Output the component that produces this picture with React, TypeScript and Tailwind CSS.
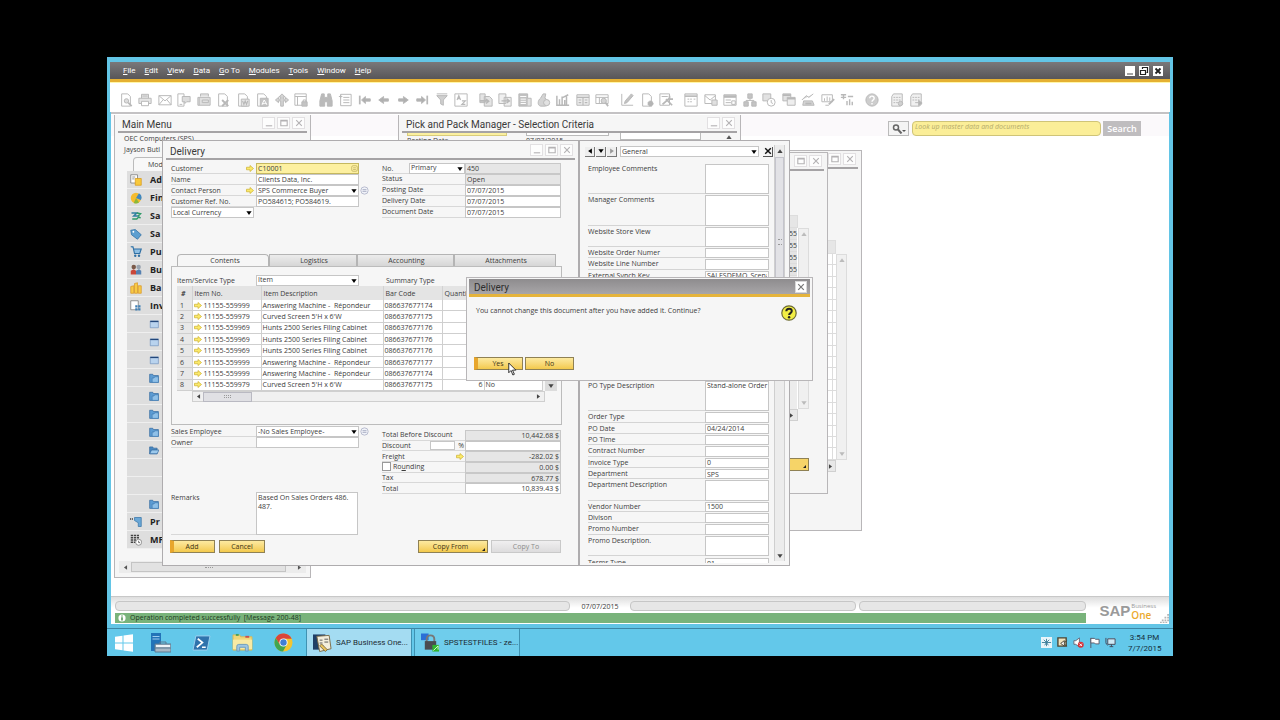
import React, { ReactNode } from "react";

const field =
  "block h-full w-full min-w-0 rounded-none border border-[#c6c6c6] bg-white px-px text-[7px] leading-[8px] text-[#3c3c3c] outline-none";
const grayField =
  "block h-full w-full min-w-0 rounded-none border border-[#c8c8c8] bg-[#e6e6e6] px-px text-[7px] leading-[8px] text-[#3c3c3c] outline-none";

/* ---------- small shared pieces ---------- */

function LinkArrow() {
  return (
    <svg viewBox="0 0 16 14" className="h-[7px] w-2 shrink-0">
      <path d="M1 4.5h7V1l7 6-7 6V9.500H1z" fill="#fbea6a" stroke="#d2b83c" strokeWidth="1.600" />
    </svg>
  );
}

function ListCircle() {
  return (
    <svg viewBox="0 0 16 16" className="h-[9px] w-[9px] shrink-0">
      <circle cx="8" cy="8" r="6.500" fill="#f1f3f9" stroke="#b0b4c8" strokeWidth="1.500" />
      <path d="M4.500 6.500h7M4.500 9.500h7" stroke="#a0a5bc" strokeWidth="1.500" />
    </svg>
  );
}

function Triangle({ dir, className }: { dir: "up" | "down" | "left" | "right"; className: string }) {
  const d = {
    up: "M4 1.500L7.500 6.500h-7z",
    down: "M4 6.500L.5 1.500h7z",
    left: "M1.500 4L6.500.5v7z",
    right: "M6.500 4L1.500.5v7z",
  }[dir];
  return (
    <svg viewBox="0 0 8 8" className={className}>
      <path d={d} fill="currentColor" />
    </svg>
  );
}

function Drop({ id, label, value }: { id: string; label?: string; value: string }) {
  return (
    <span className="relative block h-full w-full">
      <select
        id={id}
        aria-label={label}
        className="block h-full w-full appearance-none rounded-none border border-[#c6c6c6] bg-white py-0 pl-px pr-2 text-[7px] leading-[8px] text-[#3c3c3c] outline-none"
      >
        <option>{value}</option>
      </select>
      <Triangle dir="down" className="pointer-events-none absolute right-[2px] top-[3px] h-[6px] w-[6px] text-black" />
    </span>
  );
}

function WinButtons({ kinds }: { kinds: string[] }) {
  return (
    <span className="flex gap-[2px]">
      {kinds.map((k) => (
        <button
          key={k}
          type="button"
          aria-label={k}
          className="flex h-3 w-[13px] items-center justify-center border border-[#e2e0e2] bg-[#fdfdfd] text-[#b4b2b4]"
        >
          <svg viewBox="0 0 10 10" className="h-2 w-2" fill="none" stroke="currentColor" strokeWidth="1.400">
            {k === "Minimize" && <path d="M1 8.500h8" />}
            {k === "Maximize" && <path d="M1 1.500h8v7H1zM1 2.500h8" />}
            {k === "Close" && <path d="M1.500 1.500l7 7M8.500 1.500l-7 7" />}
          </svg>
        </button>
      ))}
    </span>
  );
}

function TitleBar({ title, kinds, tight }: { title: string; kinds: string[]; tight?: boolean }) {
  return (
    <div
      className={
        "mx-[3px] flex shrink-0 items-center justify-between border-b-2 border-[#a5a3a5] pr-[2px] " +
        (tight ? "h-[18px]" : "h-[19px]")
      }
    >
      <h2 className="whitespace-nowrap pl-1 pt-[3px] font-['Roboto'] text-[10px] leading-[13px] text-[#3a3a3a]">{title}</h2>
      <WinButtons kinds={kinds} />
    </div>
  );
}

function GoldButton({ children, className }: { children: ReactNode; className: string }) {
  return (
    <button
      type="button"
      className={
        "flex h-[13px] items-center justify-center border border-[#8f8154] bg-linear-to-b from-[#fdeaa0] to-[#f3c94a] text-[7px] leading-[9px] text-[#3c3416] " +
        className
      }
    >
      {children}
    </button>
  );
}

/* ---------- toolbar ---------- */

const doc = "M3 1h7l3 3v11H3z";
const G: Record<string, ReactNode> = {
  Preview: (<><path d={doc} /><circle cx="8.500" cy="9" r="2.500" fill="#ddd" /><path d="M10.500 11l4 4" strokeWidth="2" /></>),
  Print: (<><path d="M4 6V1.500h8V6M1 6h14v6H1z" fill="#e6e6e6" /><path d="M4 9.500h8v5H4z" fill="#fff" /><path d="M5 3.500h6" /></>),
  Mail: (<><path d="M1 3h14v10.500H1z" /><path d="M1 3l7 6 7-6M1 13.500l5-6M15 13.500l-5-6" /></>),
  Message: (<><path d="M1 1h7v14H1z" /><path d="M6 4h9v6h-4l-2 2v-2H6z" fill="#ddd" /><path d="M3 13h3" /></>),
  Fax: (<><path d="M4 4V1h9v3M1 5h14v9H1z" fill="#e0e0e0" /><path d="M2.500 5v9M6 8h7v3H6z" /></>),
  Excel: (<><path d={doc} /><path d="M7 8l7 7M14 8l-7 7" strokeWidth="2.200" /></>),
  Word: (<><path d={doc} /><path d="M6 7h9v8H6z" fill="#e6e6e6" /><path d="M7.500 9l1.500 4 1.500-4 1.500 4 1.500-4" strokeWidth="1.300" /></>),
  Pdf: (<><path d={doc} /><path d="M6 6h9v9H6z" fill="#c4c4c4" /><path d="M8 13l2.500-5 3 5c-2-2-4-1-5.500 0" stroke="#fff" /></>),
  Launch: (<path d="M8 1l3.500 3.500h-2V7H12V5l3.500 3L12 11V9H9.500v6h-3V9H4v2L.5 8 4 5v2h2.500V4.500h-2z" fill="#d4d4d4" />),
  Lock: (<><path d="M1 1h13v13H1zM1 4h13M4 4v10" /><path d="M9 10h6v5H9z" fill="#c4c4c4" /><path d="M10.500 10V8h3v2" /></>),
  Find: (<path d="M3 1h3v4h4V1h3l2 8v6H9.500v-5h-3v5H1V9z" fill="#bababa" />),
  Add: (<><path d="M3 1.500h12v13H3z" /><path d="M6 5h7M6 8h7M6 11h7M1 4h4M3 2v4" /></>),
  First: (<><path d="M2 3v10" strokeWidth="2" /><path d="M4 8l4.500-4v2.700H14v2.600H8.500V12z" fill="#b0b0b0" /></>),
  Previous: (<path d="M2 8l5.500-4v2.700H13v2.600H7.500V12z" fill="#b0b0b0" />),
  Next: (<path d="M14 8L8.500 4v2.700H3v2.600h5.500V12z" fill="#b0b0b0" />),
  Last: (<><path d="M14 3v10" strokeWidth="2" /><path d="M12 8L7.500 4v2.700H2v2.600h5.500V12z" fill="#b0b0b0" /></>),
  Filter: (<><path d="M2 3h12l-4.500 5v6l-3-1.500V8z" fill="#d0d0d0" /><path d="M2 1h12" /></>),
  Sort: (<><path d="M1 1h14v14H1z" /><path d="M3.500 8l2-5 2 5M4.500 6.500h2M9 9h4l-4 4h4" strokeWidth="1.300" /></>),
  Base: (<><path d="M1 1h6v10H1zM6 4h6l3 3v8H6z" fill="#e4e4e4" /><path d="M1 9h9M8 7l3 2.500L8 12" strokeWidth="1.800" /></>),
  Target: (<><path d="M1 1h8v11H1zM7 5h8v10H7z" fill="#f0f0f0" /><path d="M4 9h8M10 6.500L13 9l-3 2.500" strokeWidth="1.600" /></>),
  Profit: (<><path d="M1 1h10v14H1z" fill="#c2c2c2" /><path d="M2.500 4h7M3 7h6M3 9.500h6M3 12h6" stroke="#fff" /><path d="M11 6h4v9h-4" fill="#e2e2e2" /></>),
  Payment: (<><path d="M4 6l3-5h3l-1 5c4 1 5 9 0 9H4c-4-1-3-7 0-9z" fill="#d4d4d4" /><circle cx="11" cy="11" r="3.500" fill="#e2e2e2" /></>),
  Volume: (<path d="M1 3v11h14M4 14V7M7 14V4M10 14V8M12 14V3M8 5l6-3" strokeWidth="1.700" />),
  Journal: (<><path d="M1 2h14v12H1z" fill="#ececec" /><path d="M1 5h14M8 5v9M3 8h3M3 11h3M10 8h3M10 11h3" strokeWidth="1.300" /></>),
  Layout: (<><path d="M1 2h14v10H1zM1 5h14M5 5v7" /><circle cx="10" cy="9" r="3" fill="#d4d4d4" /><path d="M12 11l3 4" strokeWidth="2" /></>),
  Edit: (<><path d="M2 1v13h13" /><path d="M5 12l1-3 7-8 2 2-7 8z" fill="#c2c2c2" /></>),
  FormSettings: (<><path d={doc} /><circle cx="12" cy="12" r="3" fill="#b4b4b4" strokeDasharray="1.500 1" /></>),
  Tools: (<><path d="M1 1h11v13H1zM3 4h7" /><path d="M4 13l8-7M8 7l7 7M12 3v4h4" strokeWidth="2" /></>),
  Calendar: (<><path d="M1 1h14v14H1zM1 4h14M1 2.500h14" /><path d="M4 7h2M7 7h2M4 10h2M7 10h2M11 7h2" /></>),
  Alerts: (<><path d="M1 2h12v10H1zM1 3l6 5 6-5" /><path d="M9 8h6v6H9z" fill="#e0e0e0" /></>),
  Query: (<><path d="M1 2h14v12H1z" /><path d="M1 4h14" strokeWidth="3" /><path d="M3 8h6M3 11h6M10 9h4v4h-4z" /></>),
  Org: (<><path d="M5.500 1h5v5h-5zM1 10h5v5H1zM10 10h5v5h-5z" fill="#c4c4c4" /><path d="M8 6v2.500M3.500 10V8.500h9V10" /></>),
  Clock: (<><path d="M1 1h9v8H1z" fill="#e2e2e2" /><circle cx="10.500" cy="10.500" r="4.500" fill="#fff" /><path d="M10.500 8v3l2 1" /></>),
  Windows: (<><path d="M1 1h9v8H1z" fill="#e2e2e2" /><path d="M6 5h9v9H6z" fill="#eee" /><path d="M6 6.500h9M1 2.500h9" strokeWidth="2" /></>),
  Trend: (<><path d="M1 8l5-5 3 2 5-4M2 14l1-5h10l2 5z" fill="#d4d4d4" /><path d="M5 12h7" strokeWidth="2" /></>),
  Dashboard: (<><path d="M1 2h12v8H1zM5 14h4" /><path d="M4 9V6M7 9V4M10 9V5" /><path d="M9 13l6-6" strokeWidth="2.200" /></>),
  Pivot: (<><path d="M1 2h6M1 5h6M4 1v6M9 4h6M8 14V9M11 14V7M14 14v-4" strokeWidth="1.600" /></>),
  Help: (<><circle cx="8" cy="8" r="7" fill="#cdcdcd" /><path d="M5.500 6c0-3.500 5-3 5 0 0 2-2.500 2-2.500 4M8 11.500v1.500" stroke="#fff" strokeWidth="1.600" /></>),
  Sheet: (<><path d="M4 1h10v12l-2 2H2V4z" fill="#f0f0f0" /><path d="M4 5h8M4 8h8M4 11h5" strokeDasharray="2 1" /><circle cx="12" cy="12" r="2.500" fill="#d0d0d0" /></>),
  SheetNext: (<><path d="M4 1h10v12l-2 2H2V4z" fill="#f0f0f0" /><path d="M4 5h8M4 8h8" strokeDasharray="2 1" /><path d="M7 11h5M11 8.500l4 3-4 3z" fill="#b4b4b4" /></>),
};

const groups: { width: string; icons: string[] }[] = [
  { width: "w-[189px]", icons: ["Preview", "Print", "Mail", "Message", "Fax", "Excel", "Word", "Pdf", "Launch", "Lock"] },
  { width: "w-[149px]", icons: ["Find", "Add", "First", "Previous", "Next", "Last", "Filter", "Sort"] },
  { width: "w-[130px]", icons: ["Base", "Target", "Profit", "Payment", "Volume", "Journal", "Layout"] },
  { width: "w-[53px]", icons: ["Edit", "FormSettings", "Tools"] },
  { width: "w-[170px]", icons: ["Calendar", "Alerts", "Query", "Org", "Clock", "Windows", "Trend", "Dashboard", "Pivot"] },
  { width: "w-[14px]", icons: ["Help"] },
  { width: "w-[33px]", icons: ["Sheet", "SheetNext"] },
];

function Toolbar() {
  return (
    <div className="flex h-[30px] items-center gap-[11px] border-t border-[#fff6a8] bg-white pl-[9px] pt-1">
      {groups.map((g, i) => (
        <div key={i} className={"flex shrink-0 justify-between " + g.width}>
          {g.icons.map((n) => (
            <button key={n} type="button" aria-label={n} className="h-[14px] w-[14px]">
              <svg viewBox="0 0 16 16" className="h-full w-full" fill="none" stroke="#b8b8b8" strokeWidth="1.100">
                {G[n]}
              </svg>
            </button>
          ))}
        </div>
      ))}
    </div>
  );
}

function MenuBar() {
  const items: [string, string][] = [
    ["F", "ile"], ["E", "dit"], ["V", "iew"], ["D", "ata"], ["G", "o To"],
    ["M", "odules"], ["T", "ools"], ["W", "indow"], ["H", "elp"],
  ];
  return (
    <div className="flex h-5 items-center justify-between border-b-[3px] border-[#e5b032] bg-linear-to-b from-[#7a787a] to-[#585658] pl-[13px] pr-[7px]">
      <nav className="flex gap-[9px] font-['Roboto'] text-[8px] leading-[10px] text-white">
        {items.map(([a, b]) => (
          <a key={a + b} href="#" className="whitespace-nowrap">
            <u>{a}</u>
            {b}
          </a>
        ))}
      </nav>
      <div className="flex gap-1">
        {["Minimize app", "Restore app", "Close app"].map((n, i) => (
          <button key={n} type="button" aria-label={n} className="h-[10px] w-[10px] bg-white">
            <svg viewBox="0 0 10 10" className="h-full w-full" fill="none" stroke="#222" strokeWidth="1.200">
              {i === 0 && <path d="M2 8h6" stroke="#666" />}
              {i === 1 && <path d="M1.500 4.500h5v4h-5zM3.500 3V1.500h5v5H7.500" />}
              {i === 2 && <path d="M2.500 2.500l5 5M7.500 2.500l-5 5" strokeWidth="1.800" />}
            </svg>
          </button>
        ))}
      </div>
    </div>
  );
}

/* ---------- main menu window ---------- */

const M: Record<string, ReactNode> = {
  admin: (<><path d="M1 1h9v11H1z" fill="#fff" stroke="#777" /><path d="M3 4h4M3 6.500h3" stroke="#777" /><path d="M7 6h8v9H7z" fill="#f8c93c" stroke="#d79a1a" /></>),
  pie: (<><circle cx="8" cy="8" r="7" fill="#f5bc2e" /><path d="M8 8L12 1.500A7 7 0 0 1 14.500 10.500z" fill="#3f87bf" /><path d="M8 8l-3 6.500A7 7 0 0 0 12 14z" fill="#8cb93a" /></>),
  link: (<><path d="M2 4h7l-4 4h7" stroke="#2f7fa0" strokeWidth="2" /><path d="M3 12h6l3-3 2 2M9 4l5 1-3 3" stroke="#2f9a68" strokeWidth="2" /></>),
  tag: (<><path d="M1 3l6-1 8 7-5 6-8-6z" fill="#5d9fd0" stroke="#2f6fa3" /><circle cx="4.500" cy="5" r="1.200" fill="#fff" /></>),
  cart: (<><path d="M1 1h3l2 9h7l2-6H5" fill="#8fbfe3" stroke="#2f6fa3" strokeWidth="1.500" /><circle cx="7" cy="13" r="1.600" fill="#2f6fa3" /><circle cx="12" cy="13" r="1.600" fill="#2f6fa3" /></>),
  people: (<><circle cx="5" cy="4" r="3" fill="#7a5a4a" /><path d="M1 14V9l4-2 3 2v5z" fill="#c9473a" /><circle cx="11.500" cy="4" r="3" fill="#9aa4b0" /><path d="M8 14V9l4-2 3 2v5z" fill="#5580b0" /></>),
  bank: (<path d="M1 6l4-1V15H1zM6 2l4-1v14H6zM11 5h4v10h-4z" fill="#f8cb45" stroke="#d9982a" />),
  stock: (<><path d="M1 1h10v12H1z" fill="#fff" stroke="#777" /><path d="M7 7h3v3H7zM11 7h3v3h-3zM7 11h3v3H7zM11 11h3v3h-3z" fill="#3f7fb5" /></>),
  win: (<><path d="M2 3h13v11H2z" fill="#b9d3ee" stroke="#6a8cb8" /><path d="M2 4h13" stroke="#23477a" strokeWidth="2" /></>),
  folder: (<><path d="M1 2h5l1 2h8v11H1z" fill="#5d9cd3" stroke="#2b6299" /><path d="M5 8h3l1-2h6v9H5z" fill="#8fc0e8" stroke="#3a74ab" /></>),
  open: (<><path d="M1 3h5l1 2h6v9H1z" fill="#4a88c0" stroke="#2b6299" /><path d="M4 8h12l-3 6H1z" fill="#9cc9ec" stroke="#2b6299" /></>),
  pipe: (<><path d="M0 4h5" stroke="#444" strokeWidth="2" strokeDasharray="1.500 1" /><path d="M6 2h9v12h-4V9L6 6z" fill="#6aa7d6" stroke="#3a76a8" /></>),
  mrp: (<><path d="M1 2h12M1 5h12M1 8h7M1 11h6" stroke="#444" strokeWidth="1.800" strokeDasharray="3 1" /><circle cx="11.500" cy="11" r="4" fill="#fff" stroke="#777" /><path d="M11.500 9v2.500h2" stroke="#444" /></>),
};

const menuRows: { icon?: string; text?: string }[] = [
  { icon: "admin", text: "Ad" }, { icon: "pie", text: "Fin" }, { icon: "link", text: "Sa" }, { icon: "tag", text: "Sa" },
  { icon: "cart", text: "Pu" }, { icon: "people", text: "Bu" }, { icon: "bank", text: "Ba" }, { icon: "stock", text: "Inv" },
  { icon: "win" }, { icon: "win" }, { icon: "win" }, { icon: "folder" }, { icon: "folder" }, { icon: "folder" },
  { icon: "folder" }, { icon: "open" }, {}, {}, { icon: "folder" }, { icon: "pipe", text: "Pr" }, { icon: "mrp", text: "MF" },
];

function MainMenu() {
  return (
    <section className="absolute left-[3px] top-0 flex h-[463px] w-[197px] flex-col border border-t-0 border-[#b8b6b8] bg-[#f6f6f6]">
      <TitleBar title="Main Menu" kinds={["Minimize", "Maximize", "Close"]} tight />
      <div className="whitespace-nowrap pl-[9px] text-[7px] leading-[11px] text-[#3c3c3c]">
        <p>OEC Computers (SPS)</p>
        <p>Jayson Butl</p>
      </div>
      <div className="ml-[18px] mt-[2px] h-[14px] rounded-tl border border-b-0 border-[#bbb] bg-[#f8f8f8] pl-[14px] text-[7px] leading-[13px] text-[#3c3c3c]">
        Mod
      </div>
      <ul className="ml-3 w-[170px]">
        {menuRows.map((r, i) => (
          <li
            key={i}
            className={
              "flex h-[18px] items-center border-b border-[#efefef] bg-[#dedede] " + (r.text ? "pl-[3px]" : "pl-[22px]")
            }
          >
            {r.icon && (
              <svg viewBox="0 0 16 16" className={r.text ? "h-3 w-3 shrink-0" : "h-[10px] w-[10px] shrink-0"} fill="none">
                {M[r.icon]}
              </svg>
            )}
            {r.text && <b className="pl-2 text-[9px] leading-3 text-[#222]">{r.text}</b>}
          </li>
        ))}
      </ul>
      <div className="mx-1 mb-1 mt-auto flex h-3 items-center bg-[#ececec] px-1">
        <Triangle dir="left" className="h-[5px] w-[5px] text-[#555]" />
        <span className="ml-[3px] flex h-[10px] w-[155px] items-center justify-center border border-[#c4c4c4] bg-[#e2e2e2]">
          <span className="w-2 border-t border-dotted border-[#999]" />
        </span>
        <Triangle dir="right" className="ml-auto h-[5px] w-[5px] text-[#555]" />
      </div>
    </section>
  );
}

/* ---------- windows behind ---------- */

function PickAndPack() {
  return (
    <section className="absolute left-[287px] top-0 h-[60px] w-[343px] overflow-hidden border border-t-0 border-[#b8b6b8] bg-[#f6f6f6] text-[7px] leading-[7px] text-[#3c3c3c]">
      <TitleBar title="Pick and Pack Manager - Selection Criteria" kinds={["Minimize", "Close"]} tight />
      <div className="flex h-1 gap-[11px] pl-2 pr-1">
        <span className="h-[3px] w-[100px] border-x border-b border-[#d8cc7c] bg-[#fbf0a0]" />
        <span className="ml-2 h-[3px] w-[83px] border border-t-0 border-[#bbb] bg-white" />
        <span className="h-[7px] w-[81px] border border-t-0 border-[#bbb] bg-white" />
        <Triangle dir="up" className="ml-auto mr-1 mt-px h-[6px] w-[6px] text-[#555]" />
      </div>
      <div className="flex pl-2">
        <span className="w-[119px]">Posting Date</span>
        <span>07/07/2015</span>
      </div>
    </section>
  );
}

function GridWindows() {
  return (
    <>
      <section className="absolute left-[660px] top-[35px] flex h-[381px] w-[91px] flex-col items-end border border-[#b8b6b8] bg-[#f5f5f5]">
        <div className="mr-[3px] flex h-[18px] w-20 items-center justify-end border-b-2 border-[#a5a3a5] pr-[2px]">
          <WinButtons kinds={["Maximize", "Close"]} />
        </div>
        <div className="mr-[25px] mt-[71px] h-[14px] w-5 border border-[#ddd] bg-[#e6e6e6]" />
        <div className="mr-[14px] flex">
          <div className="flex h-[206px] w-5 flex-col">
            {Array.from({ length: 18 }, (_, i) => (
              <span key={i} className="flex flex-1 border-b border-[#dcdcdc] bg-white">
                <span className="ml-auto w-1 border-l border-[#dcdcdc]" />
              </span>
            ))}
          </div>
          <div className="flex w-[11px] flex-col items-center justify-between border border-[#dcdcdc] bg-[#f0f0f0] py-[2px] text-[#bbb]">
            <Triangle dir="up" className="h-[6px] w-[6px]" />
            <Triangle dir="down" className="h-[6px] w-[6px]" />
          </div>
        </div>
        <div className="mr-[25px] flex h-3 w-5 items-center justify-end border border-[#d0d0d0] bg-[#e8e8e8] pr-[2px]">
          <Triangle dir="right" className="h-[5px] w-[5px] text-[#444]" />
        </div>
      </section>
      <section className="absolute left-[650px] top-[37px] flex h-[342px] w-[67px] flex-col items-end border border-[#b8b6b8] bg-[#f5f5f5]">
        <div className="mr-[3px] flex h-[18px] w-[55px] items-center justify-end border-b-2 border-[#a5a3a5] pr-[2px]">
          <WinButtons kinds={["Maximize", "Close"]} />
        </div>
        <div className="mr-[29px] mt-11 h-[13px] w-5 border border-[#ddd] bg-[#e6e6e6]" />
        <div className="mr-[18px] flex">
          <div className="flex h-[181px] w-5 flex-col bg-white pr-px text-right text-[7px] leading-[11px] text-[#3c3c3c]">
            {Array.from({ length: 4 }, (_, i) => (
              <span key={i} className="border-b border-[#dcdcdc] bg-[#e4e4e4]">55</span>
            ))}
            <span className="flex-1 bg-[#ececec]" />
          </div>
          <div className="flex w-[11px] flex-col items-center justify-between border border-[#dcdcdc] bg-[#f0f0f0] py-[2px] text-[#bbb]">
            <Triangle dir="up" className="h-[6px] w-[6px]" />
            <Triangle dir="down" className="h-[6px] w-[6px]" />
          </div>
        </div>
        <div className="mr-[29px] flex h-3 w-5 items-center justify-end border border-[#d0d0d0] bg-[#e8e8e8] pr-[3px]">
          <Triangle dir="right" className="h-[5px] w-[5px] text-[#444]" />
        </div>
        <div className="mb-[22px] mr-[18px] mt-auto flex h-[13px] w-10 items-end justify-end border border-[#8f8154] bg-[#f6d468] p-[2px]">
          <svg viewBox="0 0 4 4" className="h-[3px] w-[3px]"><path d="M4 0v4H0z" fill="#222" /></svg>
        </div>
      </section>
    </>
  );
}

/* ---------- delivery window ---------- */

function LeftRow({ id, label, arrow, children, extra }: { id: string; label: string; arrow?: boolean; children: ReactNode; extra?: ReactNode }) {
  return (
    <div className="grid h-[11px] grid-cols-[85px_103px_12px]">
      <div className="flex items-center justify-between border-b border-[#d8d8d8] pr-[2px]">
        <label htmlFor={id}>{label}</label>
        {arrow && <LinkArrow />}
      </div>
      {children}
      <span className="flex items-center pl-px">{extra}</span>
    </div>
  );
}

const lines: [string, string, string][] = [
  ["11155-559999", "Answering Machine -  Répondeur", "086637677174"],
  ["11155-559979", "Curved Screen 5'H x 6'W", "086637677175"],
  ["11155-559969", "Hunts 2500 Series Filing Cabinet", "086637677176"],
  ["11155-559969", "Hunts 2500 Series Filing Cabinet", "086637677176"],
  ["11155-559969", "Hunts 2500 Series Filing Cabinet", "086637677176"],
  ["11155-559999", "Answering Machine -  Répondeur", "086637677177"],
  ["11155-559999", "Answering Machine -  Répondeur", "086637677174"],
  ["11155-559979", "Curved Screen 5'H x 6'W", "086637677175"],
];

function ItemTable() {
  const td = "overflow-hidden whitespace-pre border-b border-r border-[#cfcfcf] bg-white p-0 pl-px";
  return (
    <table className="h-[105px] w-[366px] table-fixed border-collapse text-left text-[7px] leading-[9px]">
      <colgroup>
        <col className="w-[15px]" />
        <col className="w-[69px]" />
        <col className="w-[122px]" />
        <col className="w-[59px]" />
        <col className="w-[42px]" />
        <col />
      </colgroup>
      <thead>
        <tr className="h-[14px] bg-[#e4e4e4]">
          <th className="p-0 pl-1 font-bold italic">#</th>
          <th className="border-x border-[#d2d2d2] p-0 pl-[2px] font-normal">Item No.</th>
          <th className="border-r border-[#d2d2d2] p-0 pl-[2px] font-normal">Item Description</th>
          <th className="border-r border-[#d2d2d2] p-0 pl-[2px] font-normal">Bar Code</th>
          <th className="p-0 pl-[2px] font-normal">Quanti</th>
          <th className="p-0" />
        </tr>
      </thead>
      <tbody>
        {lines.map(([no, desc, bar], i) => (
          <tr key={i}>
            <td className="border-b border-r border-[#cfcfcf] bg-[#e8e8e8] p-0 pl-[3px]">{i + 1}</td>
            <td className={td}>
              <span className="flex items-center gap-[2px]">
                <LinkArrow />
                {no}
              </span>
            </td>
            <td className={td}>{desc}</td>
            <td className={td}>{bar}</td>
            <td className={td + " pr-px text-right"}>{i === 7 ? "6" : ""}</td>
            <td className={td}>{i === 7 ? "No" : ""}</td>
          </tr>
        ))}
      </tbody>
    </table>
  );
}

function DeliveryWindow() {
  const tab =
    "h-3 border border-b-0 border-[#b4b4b4] bg-linear-to-b from-[#ececec] to-[#d6d6d6] pl-[2px] text-[7px] leading-[10px]";
  const totals: { label: string; value: string; white?: boolean }[] = [
    { label: "Total Before Discount", value: "10,442.68 $" },
    { label: "Discount", value: "", white: true },
    { label: "Freight", value: "-282.02 $" },
    { label: "Rounding", value: "0.00 $" },
    { label: "Tax", value: "678.77 $" },
    { label: "Total", value: "10,839.43 $", white: true },
  ];
  return (
    <section className="absolute left-[51px] top-[25px] flex h-[426px] w-[417px] flex-col border border-[#aeacae] bg-[#f6f6f6] text-[7px] leading-[9px] text-[#3c3c3c]">
      <TitleBar title="Delivery" kinds={["Minimize", "Maximize", "Close"]} />
      <div className="flex items-start gap-[11px] pl-2 pt-[3px]">
        <div>
          <LeftRow id="customer" label="Customer" arrow>
            <span className="relative block">
              <input id="customer" defaultValue="C10001" className="block h-full w-full border border-[#c5b860] bg-[#fdf0a0] px-px text-[7px] leading-[8px] text-[#3c3c3c] outline-none" />
              <svg viewBox="0 0 10 10" className="absolute right-[1px] top-[2px] h-[7px] w-[7px]" fill="none" stroke="#b7a95c">
                <rect x="1" y="1" width="8" height="8" rx="2" />
                <path d="M3 4h4M3 6.500h4" />
              </svg>
            </span>
          </LeftRow>
          <LeftRow id="name" label="Name">
            <input id="name" defaultValue="Clients Data, Inc." className={field} />
          </LeftRow>
          <LeftRow id="contact" label="Contact Person" arrow extra={<ListCircle />}>
            <Drop id="contact" value="SPS Commerce Buyer" />
          </LeftRow>
          <LeftRow id="ref" label="Customer Ref. No.">
            <input id="ref" defaultValue="PO584615; PO584619." className={field} />
          </LeftRow>
          <div className="h-[11px] w-[83px]">
            <Drop id="currency" label="Currency" value="Local Currency" />
          </div>
        </div>
        <div className="grid auto-rows-[11px] grid-cols-[83px_96px]">
          <div className="flex items-center justify-between border-b border-[#d8d8d8]">
            <label htmlFor="no">No.</label>
            <span className="h-[11px] w-[56px]"><Drop id="series" label="Series" value="Primary" /></span>
          </div>
          <input id="no" defaultValue="450" className={grayField} />
          <label htmlFor="status" className="border-b border-[#d8d8d8]">Status</label>
          <input id="status" defaultValue="Open" className={grayField} />
          {["Posting Date", "Delivery Date", "Document Date"].map((l) => (
            <React.Fragment key={l}>
              <label htmlFor={l} className="border-b border-[#d8d8d8]">{l}</label>
              <input id={l} defaultValue="07/07/2015" className={field} />
            </React.Fragment>
          ))}
        </div>
      </div>

      <div className="mt-9 flex pl-[14px]">
        <button type="button" className="-mb-px h-[13px] w-[92px] rounded-t border border-b-0 border-[#b4b4b4] bg-[#f6f6f6] pl-1 leading-3">Contents</button>
        <button type="button" className={tab + " w-[88px]"}>Logistics</button>
        <button type="button" className={tab + " w-[97px]"}>Accounting</button>
        <button type="button" className={tab + " w-[102px]"}>Attachments</button>
      </div>
      <div className="ml-2 h-[159px] w-[391px] border border-[#bcbcbc] pl-[5px] pt-[7px]">
        <div className="flex h-3 items-center">
          <label htmlFor="itype" className="w-[79px]">Item/Service Type</label>
          <span className="h-[11px] w-[103px]"><Drop id="itype" value="Item" /></span>
          <span className="pl-[27px]">Summary Type</span>
        </div>
        <div className="flex">
          <ItemTable />
          <div className="ml-[2px] flex h-[105px] w-3 flex-col justify-end bg-[#ececec]">
            <button type="button" aria-label="Scroll down" className="flex h-[11px] items-center justify-center bg-[#dcdcdc]">
              <Triangle dir="down" className="h-[6px] w-[6px] text-[#444]" />
            </button>
          </div>
        </div>
        <div className="ml-[15px] flex h-[11px] w-[353px] items-center justify-between border border-[#cfcfcf] bg-[#f0f0f0] px-[3px]">
          <span className="flex items-center gap-[2px]">
            <Triangle dir="left" className="h-[5px] w-[5px] text-[#444]" />
            <span className="flex h-[10px] w-[49px] items-center justify-center border border-[#b9b9c2] bg-[#e0e0e4]">
              <span className="h-[3px] w-[7px] border-y border-dotted border-[#999]" />
            </span>
          </span>
          <Triangle dir="right" className="h-[5px] w-[5px] text-[#444]" />
        </div>
      </div>

      <div className="flex h-[115px] items-start gap-[11px] pl-2 pt-px">
        <div className="w-[200px]">
          <LeftRow id="semp" label="Sales Employee" extra={<ListCircle />}>
            <Drop id="semp" value="-No Sales Employee-" />
          </LeftRow>
          <LeftRow id="owner" label="Owner">
            <input id="owner" className={field} />
          </LeftRow>
          <div className="mt-[44px] flex h-[43px]">
            <label htmlFor="remarks" className="w-[85px] border-b border-[#d8d8d8] pt-px">Remarks</label>
            <textarea
              id="remarks"
              defaultValue={"Based On Sales Orders 486.\n487."}
              className="block h-full w-[102px] resize-none border border-[#c6c6c6] bg-white px-px py-0 text-[7px] leading-[9px] outline-none"
            />
          </div>
        </div>
        <div className="mt-1 grid h-16 w-[179px] grid-cols-[83px_96px] grid-rows-6">
          {totals.map((t) => (
            <React.Fragment key={t.label}>
              <div className="flex items-center border-b border-[#d8d8d8]">
                {t.label === "Rounding" && (
                  <input id="round" type="checkbox" className="mr-[2px] h-[9px] w-[9px] appearance-none border border-[#999] bg-white" />
                )}
                <label htmlFor={t.label === "Rounding" ? "round" : t.label} className="whitespace-nowrap">
                  {t.label === "Rounding" ? (<>Ro<u>u</u>nding</>) : t.label}
                </label>
                {t.label === "Discount" && (
                  <>
                    <input aria-label="Discount percent" className="ml-auto h-[9px] w-[25px] border border-[#c6c6c6] bg-white" />
                    <span className="pl-[3px] pr-px">%</span>
                  </>
                )}
                {t.label === "Freight" && <span className="ml-auto pr-px"><LinkArrow /></span>}
              </div>
              <input id={t.label + (t.label === "Rounding" ? " amount" : "")} aria-label={t.label} defaultValue={t.value} className={(t.white ? field : grayField) + " text-right"} />
            </React.Fragment>
          ))}
        </div>
      </div>
      <div className="flex pl-[7px]">
        <GoldButton className="w-[45px] border-[#5c5236] border-l-4 border-l-[#e8a62c] pr-1">Add</GoldButton>
        <GoldButton className="ml-1 w-[46px]">Cancel</GoldButton>
        <GoldButton className="ml-[153px] w-[70px]">
          <span className="mx-auto">Copy From</span>
          <svg viewBox="0 0 4 4" className="mr-[2px] mt-[6px] h-[3px] w-[3px]"><path d="M4 0v4H0z" fill="#222" /></svg>
        </GoldButton>
        <button type="button" className="ml-[3px] h-[13px] w-[70px] border border-[#c9c9c9] bg-linear-to-b from-[#f0eff0] to-[#dddcdd] text-[#8c8c8c]">Copy To</button>
      </div>
    </section>
  );
}

/* ---------- user fields panel ---------- */

type UserField = { label: string; value?: string; h: string };
const one = "flex-[31]";
const two = "flex-[61]";
const three = "flex-[91]";
const upper: UserField[] = [
  { label: "Employee Comments", h: three },
  { label: "Manager Comments", h: three },
  { label: "Website Store View", h: two },
  { label: "Website Order Numer", h: one },
  { label: "Website Line Number", h: one },
  { label: "External Synch Key", value: "SALESDEMO_Scena", h: one },
];
const lower: UserField[] = [
  { label: "PO Type Description", value: "Stand-alone Order", h: three },
  { label: "Order Type", h: one },
  { label: "PO Date", value: "04/24/2014", h: one },
  { label: "PO Time", h: one },
  { label: "Contract Number", h: one },
  { label: "Invoice Type", value: "0", h: one },
  { label: "Department", value: "SPS", h: one },
  { label: "Department Description", h: two },
  { label: "Vendor Number", value: "1500", h: one },
  { label: "Divison", h: one },
  { label: "Promo Number", h: one },
  { label: "Promo Description.", h: two },
];

function UserRow({ f }: { f: UserField }) {
  return (
    <div className={"grid min-h-0 grid-cols-[117px_64px] grid-rows-1 pb-px " + f.h}>
      <label htmlFor={f.label} className="border-b border-[#d4d4d4]">{f.label}</label>
      {f.h !== one ? (
        <textarea id={f.label} defaultValue={f.value} className={field + " resize-none overflow-hidden whitespace-nowrap py-0"} />
      ) : (
        <input id={f.label} defaultValue={f.value} className={field} />
      )}
    </div>
  );
}

function UserFields() {
  return (
    <section className="absolute left-[468px] top-[25px] flex h-[426px] w-[211px] border border-[#aeacae] bg-[#f6f6f6] pl-[5px] text-[7px] leading-[9px] text-[#3c3c3c]">
      <div className="flex w-[189px] flex-col overflow-hidden">
        <div className="flex h-[19px] items-center pt-[2px]">
          {(["left", "down", "right"] as const).map((d) => (
            <button key={d} type="button" aria-label={"Go " + d} className="mr-px flex h-[10px] w-[10px] items-center justify-center border-b border-r border-[#777] bg-[#eee]">
              <Triangle dir={d} className={d === "right" ? "h-[6px] w-[6px] text-[#999]" : "h-[6px] w-[6px] text-black"} />
            </button>
          ))}
          <span className="ml-[2px] h-[11px] w-[139px]"><Drop id="category" label="Category" value="General" /></span>
          <button type="button" aria-label="Close panel" className="ml-1 flex h-[10px] w-[10px] items-center justify-center border-b border-r border-[#555] bg-[#f4f4f4]">
            <svg viewBox="0 0 10 10" className="h-2 w-2" stroke="#111" strokeWidth="1.800"><path d="M1.500 1.500l7 7M8.500 1.500l-7 7" /></svg>
          </button>
        </div>
        <div className="mt-1 flex h-[118px] shrink-0 flex-col pl-[3px]">
          {upper.map((f) => <UserRow key={f.label} f={f} />)}
        </div>
        <div className="mt-auto flex h-[176px] shrink-0 flex-col pl-[3px]">
          {lower.map((f) => <UserRow key={f.label} f={f} />)}
        </div>
        <div className="mb-[2px] grid h-[6px] shrink-0 grid-cols-[117px_64px] overflow-hidden pl-[3px] pt-px">
          <label htmlFor="terms">Terms Type</label>
          <input id="terms" defaultValue="01" className="block h-[11px] w-16 border border-[#c6c6c6] bg-white px-px text-[7px] leading-[8px] text-[#3c3c3c]" />
        </div>
      </div>
      <div className="my-1 flex w-[11px] flex-col items-center border-x border-[#cfcfcf] bg-[#ececec] text-[#444]">
        <Triangle dir="up" className="my-[3px] h-[6px] w-[6px] shrink-0" />
        <span className="flex h-[170px] w-full items-center justify-center border border-[#c4c4cc] bg-[#e2e2e6]">
          <span className="h-[6px] w-1 border-y border-dotted border-[#999]" />
        </span>
        <Triangle dir="down" className="mb-[2px] mt-auto h-[6px] w-[6px] shrink-0" />
      </div>
    </section>
  );
}

/* ---------- confirmation dialog ---------- */

function Dialog() {
  return (
    <section role="dialog" aria-label="Delivery" className="absolute left-[355px] top-[162px] h-[104px] w-[347px] border border-[#b8b6b8] bg-[#f6f6f6] px-[2px] pt-px text-[7px] leading-[9px] text-[#3c3c3c]">
      <div className="flex h-[18px] items-center justify-between border-b-[3px] border-[#e5b43c] bg-linear-to-b from-[#8e8c8e] to-[#a8a6a8] pl-[5px] pr-[3px]">
        <h2 className="pt-[2px] font-['Roboto'] text-[10px] leading-3 text-[#2e2e2e]">Delivery</h2>
        <button type="button" aria-label="Close dialog" className="flex h-[12px] w-3 items-center justify-center border border-[#d8d8d8] bg-white">
          <svg viewBox="0 0 10 10" className="h-2 w-2" stroke="#777" strokeWidth="1.500"><path d="M1.500 1.500l7 7M8.500 1.500l-7 7" /></svg>
        </button>
      </div>
      <div className="flex justify-between pl-[7px] pr-[13px] pt-2">
        <p className="pt-px">You cannot change this document after you have added it. Continue?</p>
        <svg viewBox="0 0 16 16" className="h-4 w-4">
          <circle cx="8" cy="8" r="7.200" fill="#f2ee45" stroke="#6c6a35" strokeWidth="1.200" />
          <path d="M5.300 6.300c0-3.600 5.500-3.400 5.500-.2 0 2-2.700 2-2.700 4" fill="none" stroke="#222" strokeWidth="2" />
          <circle cx="8.100" cy="12.200" r="1.200" fill="#222" />
        </svg>
      </div>
      <div className="flex gap-[2px] pl-[5px] pt-9">
        <GoldButton className="w-[49px] border-l-4 border-l-[#e8a62c] pr-1">Yes</GoldButton>
        <GoldButton className="w-[49px]">No</GoldButton>
      </div>
      <svg viewBox="0 0 12 18" className="absolute left-[41px] top-[84px] h-[14px] w-[9px]">
        <path d="M1 1v13l3-3 2.500 6 2-1-2.500-5.500h4.500z" fill="#fff" stroke="#222" strokeWidth="1.200" />
      </svg>
    </section>
  );
}

/* ---------- status bar and taskbar ---------- */

function StatusBar() {
  const box = "h-[10px] rounded-sm border border-[#c6c6c6] bg-[#e6e6e6]";
  return (
    <footer className="flex h-7 shrink-0 justify-between border-t border-[#c8c8c8] bg-linear-to-b from-[#dedede] to-white to-40% pl-1">
      <div className="w-[971px] pt-1">
        <div className="flex items-center">
          <span className={box + " min-w-0 flex-[456]"} />
          <span className="w-[60px] text-center text-[7px] leading-[9px] text-[#3c3c3c]">07/07/2015</span>
          <span className={box + " mr-[3px] min-w-0 flex-[226]"} />
          <span className={box + " min-w-0 flex-[226]"} />
        </div>
        <div className="mt-[2px] flex h-[10px] items-center gap-1 bg-[#79b37b] pl-[3px] text-[7px] leading-[10px] text-[#1e3a20]">
          <svg viewBox="0 0 10 10" className="h-2 w-2">
            <circle cx="5" cy="5" r="4.500" fill="#fff" />
            <path d="M5 4v4M5 2v1.200" stroke="#2d7a33" strokeWidth="1.600" />
          </svg>
          <span className="whitespace-pre">Operation completed successfully  [Message 200-48]</span>
        </div>
      </div>
      <div className="flex items-end">
        <div className="flex items-center gap-px pb-1">
          <span className="font-['Liberation_Sans'] text-[15px] font-bold leading-4 text-[#9a9a9a]">SAP</span>
          <span className="flex flex-col">
            <span className="text-[6px] leading-[8px] text-[#9a9a9a]">Business</span>
            <span className="text-[10px] font-semibold leading-[10px] text-[#eba92c]">One</span>
          </span>
        </div>
        <svg viewBox="0 0 10 10" className="mb-px ml-1 h-[9px] w-[9px]" fill="#b5b5b5">
          <path d="M8 0h2v2H8zM5 3h2v2H5zM8 3h2v2H8zM2 6h2v2H2zM5 6h2v2H5zM8 6h2v2H8zM0 8.500h2V10H0zM3 8.500h2V10H3zM6 8.500h2V10H6z" />
        </svg>
      </div>
    </footer>
  );
}

function Taskbar() {
  const slot = "flex w-[41px] items-center justify-center";
  const task = "flex w-[106px] items-center gap-1 border-x border-[#3f92b2] pl-[6px] font-['Roboto'] text-[8px] leading-[10px] text-[#1d2b33]";
  return (
    <div className="mt-1 flex h-7 shrink-0 border-t border-[#3d86a5] bg-[#63c8ea]">
      <button type="button" aria-label="Start" className="flex w-[33px] items-center justify-center">
        <svg viewBox="0 0 18 18" className="h-[18px] w-[18px]" fill="#fff">
          <path d="M0 2.800l7.500-1v6.700H0zM8.500 1.600L18 .3v8.200H8.500zM0 9.500h7.500v6.700l-7.500-1zM8.500 9.500H18v8.200l-9.500-1.300z" />
        </svg>
      </button>
      <button type="button" aria-label="Server Manager" className={slot}>
        <svg viewBox="0 0 20 20" className="h-5 w-5">
          <path d="M0 0h10v18H0z" fill="#2273b8" /><path d="M1.500 3.500h7M1.500 6h7" stroke="#9ccbef" />
          <path d="M4 11h16v8H4z" fill="#a9b8c4" stroke="#5b7a92" /><path d="M9 11V9h6v2M4 15h16" stroke="#5b7a92" fill="none" /><path d="M5 12h14v2H5z" fill="#eef4f8" />
        </svg>
      </button>
      <button type="button" aria-label="PowerShell" className={slot}>
        <svg viewBox="0 0 20 17" className="h-4 w-[19px]">
          <path d="M4 1h15l-3 15H1z" fill="#2f73ac" stroke="#9fd0ef" /><path d="M6 4l5 4-6 5M10.500 13h4" stroke="#fff" strokeWidth="1.800" fill="none" />
        </svg>
      </button>
      <button type="button" aria-label="File Explorer" className={slot}>
        <svg viewBox="0 0 22 20" className="h-[19px] w-[21px]">
          <path d="M1 2h7l1 2h12v14H1z" fill="#f1d778" stroke="#d5b95a" /><path d="M4 1h3v2H4z" fill="#4aa05a" /><path d="M14 3h4v2h-4z" fill="#c85050" />
          <path d="M1 7h20v10H1z" fill="#f9eaa4" /><path d="M5 19v-5q0-2 2-2h8q2 0 2 2v5h-3v-4H8v4z" fill="#9fc6e2" stroke="#6a9cc0" />
        </svg>
      </button>
      <button type="button" aria-label="Chrome" className={slot}>
        <svg viewBox="0 0 20 20" className="h-[19px] w-[19px]">
          <circle cx="10" cy="10" r="9.500" fill="#f3c530" />
          <path d="M10 6h8.600A9.500 9.500 0 0 0 1.800 5.200L6 12z" fill="#d9453a" />
          <path d="M1.800 5.200A9.500 9.500 0 0 0 9.500 19.500L13.500 12 6 12z" fill="#41a550" />
          <circle cx="10" cy="10" r="4.300" fill="#fff" /><circle cx="10" cy="10" r="3.400" fill="#3f7fd6" />
        </svg>
      </button>
      <button type="button" className={task + " ml-[2px] bg-[#a4dcf2]"}>
        <svg viewBox="0 0 20 20" className="h-5 w-[19px] shrink-0">
          <path d="M0 1h13v16H0z" fill="#1f3f66" /><path d="M4 3l13-1 2 14-12 3z" fill="#f3eedc" stroke="#7a6a48" />
          <path d="M7 7h3M12 6h4M7 10h3M12 9h4M8 13h3" stroke="#555" /><path d="M9 11l6 6-2 2-6-6z" fill="#e8c35a" stroke="#7a6a48" />
        </svg>
        <span className="whitespace-nowrap">SAP Business One...</span>
      </button>
      <button type="button" className={task + " ml-[2px] bg-[#6fcdec]"}>
        <svg viewBox="0 0 20 20" className="h-5 w-[19px] shrink-0">
          <path d="M0 0h8v7H0z" fill="#2a6fd6" /><path d="M6 9V6q0-4 4-4t4 4v3" fill="none" stroke="#777" strokeWidth="2" />
          <path d="M4 8h12v9H4z" fill="#4a4d50" /><path d="M12 12h7v7h-7z" fill="#2fb52f" /><path d="M13 18l5-5M18 13v4" stroke="#d8ffd8" />
        </svg>
        <span className="whitespace-nowrap">SPSTESTFILES - ze...</span>
      </button>
      <div className="ml-auto flex items-center gap-[5px]">
        <svg viewBox="0 0 12 12" className="h-[11px] w-[11px]"><path d="M0 0h12v12H0z" fill="#e9f5fa" /><path d="M1 6h10M6 2v8M3 3l3 3 3-3M4 9l2-3 2 3" stroke="#3b7d99" fill="none" /></svg>
        <svg viewBox="0 0 12 12" className="h-[11px] w-[11px]"><path d="M1 1h9v9H1z" fill="#efe3bd" stroke="#4a4535" strokeWidth="1.500" /><path d="M4 7l4-3v6z" fill="#fff" stroke="#4a4535" /><path d="M8 6l3-2M8 8l3 2" stroke="#4a4535" /></svg>
        <svg viewBox="0 0 12 12" className="h-[11px] w-[11px]"><path d="M1 4h2l4-3v10L3 8H1z" fill="#fff" stroke="#667" /><circle cx="8.500" cy="8.500" r="3.200" fill="#d8343a" /><path d="M7.200 7.200l2.600 2.600M9.800 7.200L7.200 9.800" stroke="#fff" /></svg>
        <svg viewBox="0 0 12 12" className="h-[11px] w-[11px]"><path d="M2 1v11" stroke="#556" /><path d="M2 1.500h4l1 1h4v5H7l-1-1H2z" fill="#fff" stroke="#556" /></svg>
        <svg viewBox="0 0 12 12" className="h-[11px] w-[11px]"><path d="M3 2h8v6H3zM5 10.500h4M7 8v2.500" fill="#cfe9f5" stroke="#445" /><path d="M1 1v5q0 2 2 3" fill="none" stroke="#445" /></svg>
      </div>
      <div className="ml-3 mr-3 flex w-[33px] flex-col justify-center text-center font-['Roboto'] text-[8px] leading-[11px] text-[#17303c]">
        <span>3:54 PM</span>
        <span>7/7/2015</span>
      </div>
    </div>
  );
}

export default function App() {
  return (
    <div className="flex min-h-screen bg-black px-[107px] pb-16 pt-[57px] font-['Open_Sans',sans-serif]">
      <div className="flex min-w-0 flex-1 flex-col bg-[#63c5e6] pt-[5px]">
        <div className="mx-[3px] flex min-h-0 flex-1 flex-col">
          <MenuBar />
          <Toolbar />
          <div className="mx-px flex min-h-0 flex-1 flex-col bg-white">
            <div className="h-[3px] shrink-0 border-t-2 border-[#c4c2c4] bg-white" />
            <main className="relative min-h-[470px] flex-1 overflow-hidden bg-white">
              <div className="h-[21px] bg-[#fbf9fb] pl-[777px] pt-[6px]">
                <form className="flex h-[15px] items-stretch">
                  <button type="button" aria-label="Search scope" className="flex w-[21px] items-center justify-center border border-[#bbb] bg-[#f4f4f4]">
                    <svg viewBox="0 0 16 10" className="h-[10px] w-4" fill="none" stroke="#666" strokeWidth="1.500">
                      <circle cx="5" cy="3.500" r="2.500" /><path d="M7 5.500l3.500 4" strokeWidth="2" /><path d="M11 6h4l-2 2z" fill="#555" stroke="none" />
                    </svg>
                  </button>
                  <input aria-label="Search text" placeholder="Look up master data and documents" className="ml-[3px] w-[189px] rounded-sm border border-[#cfc478] bg-[#fbee98] px-[2px] pb-1 font-['Noto_Sans'] text-[7px] italic leading-[8px] outline-none placeholder:text-[#b9ae6e]" />
                  <button type="button" className="ml-[2px] w-[38px] bg-[#bfbdbf] text-[9px] font-semibold leading-3 text-white">Search</button>
                </form>
              </div>
              <MainMenu />
              <PickAndPack />
              <GridWindows />
              <DeliveryWindow />
              <UserFields />
              <Dialog />
            </main>
            <StatusBar />
          </div>
        </div>
        <Taskbar />
      </div>
    </div>
  );
}
